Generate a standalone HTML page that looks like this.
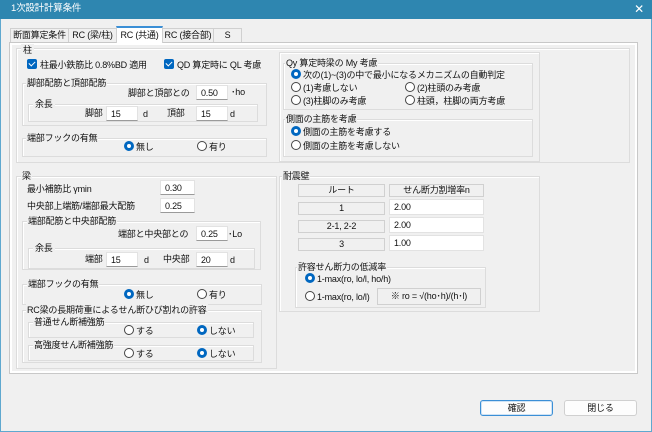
<!DOCTYPE html>
<html><head><meta charset="utf-8"><style>
*{box-sizing:border-box;margin:0;padding:0}
body{width:652px;height:432px;background:#f0f0f0;font-family:"Liberation Sans","Noto Sans CJK JP",sans-serif;font-size:9px;letter-spacing:-0.2px;color:#111;position:relative;overflow:hidden}
.a{position:absolute;white-space:nowrap;line-height:12px}
.g{position:absolute;border:1px solid #dcdcdc;box-shadow:inset 1px 1px 0 #fff}
.in{position:absolute;background:#fff;border:1px solid #e2e2e2;border-bottom:1px solid #9a9a9a;height:15px;padding:1px 0 0 4px;line-height:12px}
.rb{display:inline-block;width:10px;height:10px;border:1px solid #444;border-radius:50%;vertical-align:-1px;margin-right:2px;background:#fff}
.rb.on{border:3px solid #0067c0}
.cb{display:inline-block;width:10px;height:10px;background:#0067c0;border-radius:2px;vertical-align:-1px;margin-right:3px;position:relative}
.cb:after{content:"";position:absolute;left:3px;top:1px;width:3px;height:5px;border:solid #fff;border-width:0 1.3px 1.3px 0;transform:rotate(45deg)}
.tab{position:absolute;top:28px;height:14px;border:1px solid #d0d0d0;border-bottom:none;background:#f0f0f0;text-align:center;line-height:13px;white-space:nowrap;overflow:hidden}
.lb{position:absolute;background:#f0f0f0;border:1px solid #d0d0d0;text-align:center;line-height:11px;height:13px;white-space:nowrap}
.btn{position:absolute;top:400px;height:16px;width:73px;background:#fdfdfd;border:1px solid #d0d0d0;border-radius:3px;text-align:center;line-height:14px}
</style></head><body>
<div style="position:absolute;left:0;top:0;width:652px;height:19px;background:#2e86b0;color:#fff;font-size:9.5px;line-height:18px;padding-left:11px">1次設計計算条件<span style="position:absolute;right:8px;top:0;font-size:12px">✕</span></div>
<div style="position:absolute;left:0;top:19px;width:1px;height:413px;background:#5fa8cf"></div>
<div style="position:absolute;right:0;top:19px;width:1px;height:413px;background:#5fa8cf"></div>
<div style="position:absolute;left:0;top:431px;width:652px;height:1px;background:#5fa8cf"></div>

<div style="position:absolute;left:9px;top:42px;width:629px;height:332px;border:1px solid #c8c8c8;background:#f0f0f0;box-shadow:inset 0 0 0 2px #fff"></div>
<div class="tab" style="left:10px;width:59px">断面算定条件</div>
<div class="tab" style="left:68px;width:49px">RC (梁/柱)</div>
<div class="tab" style="left:162px;width:52px">RC (接合部)</div>
<div class="tab" style="left:213px;width:29px">S</div>
<div class="tab" style="left:116px;top:26px;height:17px;width:47px;background:#fff;border-top:2px solid #3b8fd6;line-height:14px;z-index:2">RC (共通)</div>

<!-- 柱 -->
<div class="g" style="left:16px;top:48px;width:614px;height:115px"></div>
<div class="a" style="left:21px;top:44px;background:#f0f0f0;padding:0 2px">柱</div>
<div class="a" style="left:27px;top:59px"><span class="cb"></span>柱最小鉄筋比 0.8%BD 適用</div>
<div class="a" style="left:164px;top:59px"><span class="cb"></span>QD 算定時に QL 考慮</div>
<div class="g" style="left:22px;top:83px;width:245px;height:43px"></div>
<div class="a" style="left:26px;top:77px;background:#f0f0f0;padding:0 1px">脚部配筋と頂部配筋</div>
<div class="a" style="left:128px;top:87px">脚部と頂部との</div>
<div class="in" style="left:196px;top:85px;width:32px">0.50</div>
<div class="a" style="left:231px;top:86px">･ho</div>
<div class="g" style="left:28px;top:104px;width:230px;height:18px"></div>
<div class="a" style="left:33px;top:98px;background:#f0f0f0;padding:0 2px">余長</div>
<div class="a" style="left:85px;top:107px">脚部</div>
<div class="in" style="left:106px;top:106px;width:32px">15</div>
<div class="a" style="left:143px;top:108px">d</div>
<div class="a" style="left:167px;top:107px">頂部</div>
<div class="in" style="left:196px;top:106px;width:32px">15</div>
<div class="a" style="left:230px;top:108px">d</div>
<div class="g" style="left:22px;top:138px;width:245px;height:19px"></div>
<div class="a" style="left:26px;top:132px;background:#f0f0f0;padding:0 1px">端部フックの有無</div>
<div class="a" style="left:124px;top:141px"><span class="rb on"></span>無し</div>
<div class="a" style="left:197px;top:141px"><span class="rb"></span>有り</div>

<div class="g" style="left:279px;top:52px;width:261px;height:110px"></div>
<div class="g" style="left:283px;top:63px;width:250px;height:47px"></div>
<div class="a" style="left:285px;top:57px;background:#f0f0f0;padding:0 1px">Qy 算定時梁の My 考慮</div>
<div class="a" style="left:291px;top:69px"><span class="rb on"></span>次の(1)~(3)の中で最小になるメカニズムの自動判定</div>
<div class="a" style="left:291px;top:82px"><span class="rb"></span>(1)考慮しない</div>
<div class="a" style="left:405px;top:82px"><span class="rb"></span>(2)柱頭のみ考慮</div>
<div class="a" style="left:291px;top:95px"><span class="rb"></span>(3)柱脚のみ考慮</div>
<div class="a" style="left:405px;top:95px"><span class="rb"></span>柱頭，柱脚の両方考慮</div>
<div class="g" style="left:283px;top:119px;width:250px;height:38px"></div>
<div class="a" style="left:285px;top:113px;background:#f0f0f0;padding:0 1px">側面の主筋を考慮</div>
<div class="a" style="left:291px;top:126px"><span class="rb on"></span>側面の主筋を考慮する</div>
<div class="a" style="left:291px;top:140px"><span class="rb"></span>側面の主筋を考慮しない</div>

<!-- 梁 -->
<div class="g" style="left:16px;top:176px;width:261px;height:193px"></div>
<div class="a" style="left:21px;top:170px;background:#f0f0f0;padding:0 1px">梁</div>
<div class="a" style="left:27px;top:183px">最小補筋比 γmin</div>
<div class="in" style="left:160px;top:180px;width:35px">0.30</div>
<div class="a" style="left:27px;top:200px">中央部上端筋/端部最大配筋</div>
<div class="in" style="left:160px;top:198px;width:35px">0.25</div>
<div class="g" style="left:22px;top:221px;width:239px;height:49px"></div>
<div class="a" style="left:27px;top:215px;background:#f0f0f0;padding:0 1px">端部配筋と中央部配筋</div>
<div class="a" style="left:118px;top:228px">端部と中央部との</div>
<div class="in" style="left:196px;top:226px;width:32px">0.25</div>
<div class="a" style="left:228px;top:228px">･Lo</div>
<div class="g" style="left:28px;top:248px;width:227px;height:21px"></div>
<div class="a" style="left:33px;top:242px;background:#f0f0f0;padding:0 2px">余長</div>
<div class="a" style="left:85px;top:253px">端部</div>
<div class="in" style="left:106px;top:252px;width:32px">15</div>
<div class="a" style="left:144px;top:254px">d</div>
<div class="a" style="left:163px;top:253px">中央部</div>
<div class="in" style="left:196px;top:252px;width:32px">20</div>
<div class="a" style="left:230px;top:254px">d</div>
<div class="g" style="left:22px;top:284px;width:240px;height:21px"></div>
<div class="a" style="left:27px;top:278px;background:#f0f0f0;padding:0 1px">端部フックの有無</div>
<div class="a" style="left:124px;top:289px"><span class="rb on"></span>無し</div>
<div class="a" style="left:197px;top:289px"><span class="rb"></span>有り</div>
<div class="g" style="left:22px;top:310px;width:240px;height:53px"></div>
<div class="a" style="left:26px;top:304px;background:#f0f0f0;padding:0 1px">RC梁の長期荷重によるせん断ひび割れの許容</div>
<div class="g" style="left:28px;top:322px;width:226px;height:16px"></div>
<div class="a" style="left:33px;top:316px;background:#f0f0f0;padding:0 1px">普通せん断補強筋</div>
<div class="a" style="left:124px;top:325px"><span class="rb"></span>する</div>
<div class="a" style="left:197px;top:325px"><span class="rb on"></span>しない</div>
<div class="g" style="left:28px;top:345px;width:226px;height:16px"></div>
<div class="a" style="left:33px;top:339px;background:#f0f0f0;padding:0 1px">高強度せん断補強筋</div>
<div class="a" style="left:124px;top:348px"><span class="rb"></span>する</div>
<div class="a" style="left:197px;top:348px"><span class="rb on"></span>しない</div>

<!-- 耐震壁 -->
<div class="g" style="left:279px;top:176px;width:261px;height:136px"></div>
<div class="a" style="left:282px;top:170px;background:#f0f0f0;padding:0 1px">耐震壁</div>
<div class="lb" style="left:298px;top:184px;width:87px">ルート</div>
<div class="lb" style="left:389px;top:184px;width:95px">せん断力割増率n</div>
<div class="lb" style="left:298px;top:202px;width:87px">1</div>
<div class="in" style="left:389px;top:199px;width:95px;height:16px;border-bottom-color:#e2e2e2">2.00</div>
<div class="lb" style="left:298px;top:220px;width:87px">2-1, 2-2</div>
<div class="in" style="left:389px;top:217px;width:95px;height:16px;border-bottom-color:#e2e2e2">2.00</div>
<div class="lb" style="left:298px;top:238px;width:87px">3</div>
<div class="in" style="left:389px;top:235px;width:95px;height:16px;border-bottom-color:#e2e2e2">1.00</div>
<div class="g" style="left:295px;top:267px;width:191px;height:41px"></div>
<div class="a" style="left:297px;top:261px;background:#f0f0f0;padding:0 1px">許容せん断力の低減率</div>
<div class="a" style="left:305px;top:273px"><span class="rb on"></span>1-max(ro, lo/l, ho/h)</div>
<div class="a" style="left:305px;top:291px"><span class="rb"></span>1-max(ro, lo/l)</div>
<div class="lb" style="left:377px;top:288px;width:104px;height:17px;line-height:15px">※ ro = √(ho･h)/(h･l)</div>

<div class="btn" style="left:480px;border:1px solid #3b8fd6;box-shadow:inset 0 0 0 1px #cfe3f5">確認</div>
<div class="btn" style="left:564px">閉じる</div>
</body></html>
